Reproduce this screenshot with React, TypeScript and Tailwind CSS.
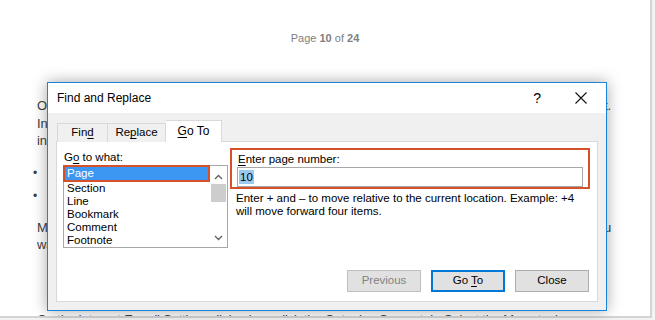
import React from "react";

const ui = { fontFamily: '"Liberation Sans", Arial, sans-serif' };
const doc = { fontFamily: '"Liberation Sans", Arial, sans-serif' };

function U({ children }: { children: React.ReactNode }) {
  return <span className="underline underline-offset-2">{children}</span>;
}

function Chevron({ up }: { up?: boolean }) {
  return (
    <svg width="9" height="6" viewBox="0 0 9 6" className="block">
      <path
        d={up ? "M1 5 L4.5 1.5 L8 5" : "M1 1 L4.5 4.5 L8 1"}
        fill="none"
        stroke="#606060"
        strokeWidth="1.3"
      />
    </svg>
  );
}

export default function App() {
  const items = ["Section", "Line", "Bookmark", "Comment", "Footnote"];
  return (
    <div className="relative w-[655px] h-[320px] overflow-hidden bg-[#f3f3f3]">
      <div className="w-[652px] h-[318px] bg-white border-r-2 border-b-2 border-[#d4d4d4] overflow-hidden">
        <div className="pt-[31px] text-center text-[11px] leading-[14px] text-[#808080]" style={doc}>
          Page <b>10</b> of <b>24</b>
        </div>
        <div className="ml-[37px] pt-[52px] w-[574px] text-[13px] tracking-[-0.2px] text-[#404040]" style={doc}>
          <div className="h-[18px] leading-[18px] text-justify [text-align-last:justify] overflow-hidden">
            On the File tab, click Account Settings, and then click Account Settings again to open it.
          </div>
          <div className="h-[17px] leading-[17px] whitespace-nowrap overflow-hidden">
            In the E-mail tab, select the account you want to change and click Change.
          </div>
          <div className="h-[17px] leading-[17px] whitespace-nowrap overflow-hidden">
            in the Change Account dialog box, click More Settings to continue.
          </div>
          <div className="mt-[15px] flex flex-col gap-[5px]">
            <div className="h-[18px] leading-[18px] flex items-center gap-[20px] -ml-[4px]">
              <span className="text-[12px]">•</span>
              <span>Server settings</span>
            </div>
            <div className="h-[18px] leading-[18px] flex items-center gap-[20px] -ml-[4px]">
              <span className="text-[12px]">•</span>
              <span>Account settings</span>
            </div>
          </div>
          <div className="mt-[14px] h-[17px] leading-[17px] text-justify [text-align-last:justify] overflow-hidden">
            More settings are available from this dialog box, depending on the type of the account that you
          </div>
          <div className="h-[17px] leading-[17px] whitespace-nowrap overflow-hidden">
            want to configure for this mailbox.
          </div>
          <div className="mt-[58px] h-[17px] leading-[17px] whitespace-nowrap">
            On the Internet E-mail Settings dialog box, click the Outgoing Server tab. Select the My outgoing
          </div>
        </div>
      </div>

      {/* Dialog window */}
      <div
        className="absolute left-[47px] top-[82px] w-[560px] h-[229px] border border-[#1a84d8] bg-[#f0f0f0] shadow-[0_0_14px_rgba(0,0,0,0.35)] flex flex-col text-[11.5px] text-black"
        style={ui}
      >
        <div className="h-[30px] bg-white flex items-center pl-[9px] pr-[19px] shrink-0">
          <span className="text-[12px]">Find and Replace</span>
          <span className="ml-auto mr-[34px] text-[14px]">?</span>
          <svg width="12" height="12" viewBox="0 0 12 12">
            <path d="M0.5 0.5 L11.5 11.5 M11.5 0.5 L0.5 11.5" stroke="#111" strokeWidth="1.1" />
          </svg>
        </div>

        <div className="flex-1 flex flex-col px-[8px] pt-[7px] pb-[8px]">
          {/* tabs */}
          <div className="flex items-end h-[22px] -mb-[1px] relative z-10 pl-[1px]">
            <div className="w-[51px] h-[19px] border border-b-0 border-[#d9d9d9] bg-[#f0f0f0] flex items-center justify-center">
              <span>
                Fin<U>d</U>
              </span>
            </div>
            <div className="w-[58px] h-[19px] border border-l-0 border-b-0 border-[#d9d9d9] bg-[#f0f0f0] flex items-center justify-center">
              <span>
                Re<U>p</U>lace
              </span>
            </div>
            <div className="w-[56px] h-[22px] border border-l-0 border-b-0 border-[#d9d9d9] bg-white flex items-center justify-center pb-[2px] text-[12px]">
              <span>
                <U>G</U>o To
              </span>
            </div>
          </div>

          {/* panel */}
          <div className="flex-1 bg-white border border-[#d9d9d9] flex flex-col pl-[6px] pr-[7px] pt-[6px] pb-[9px]">
            <div className="flex gap-[2px]">
              {/* left column */}
              <div className="w-[165px] flex flex-col">
                <div className="h-[17px] leading-[17px] pl-[1px] pt-[1px]">
                  G<U>o</U> to what:
                </div>
                <div className="h-[83px] border border-[#a8a8a8] flex">
                  <div className="flex-1 flex flex-col">
                    <div className="h-[17px] border-2 border-[#d4512a] bg-[#3c97f3] text-white leading-[13px] pl-[2px] -ml-[1px] -mt-[1px]">
                      Page
                    </div>
                    {items.map((it) => (
                      <div key={it} className="h-[13px] leading-[13px] pl-[3px]">
                        {it}
                      </div>
                    ))}
                  </div>
                  <div className="w-[17px] flex flex-col items-center pt-[8px] pb-[6px]">
                    <Chevron up />
                    <div className="mt-[4px] w-[15px] h-[18px] bg-[#cdcdcd]" />
                    <div className="flex-1" />
                    <Chevron />
                  </div>
                </div>
              </div>

              {/* right column */}
              <div className="flex-1 flex flex-col">
                <div className="h-[41px] border-2 border-[#d4512a] px-[5px] pt-[2px]">
                  <div className="h-[15px] leading-[15px] pl-[1px]">
                    <U>E</U>nter page number:
                  </div>
                  <div className="h-[20px] border border-[#a8a8a8] flex items-center pl-[1px]">
                    <span className="bg-[#99c9ef] leading-[14px] px-[1px]">10</span>
                  </div>
                </div>
                <div className="pl-[6px] pt-[3px] leading-[13px]">
                  Enter + and – to move relative to the current location. Example: +4
                  <br />
                  will move forward four items.
                </div>
              </div>
            </div>

            <div className="flex-1" />

            <div className="flex justify-end gap-[10px] pr-[1px]">
              <div className="w-[74px] h-[22px] border border-[#bfbfbf] bg-[#e1e1e1] flex items-center justify-center text-[#838383]">
                <span>Previous</span>
              </div>
              <div className="w-[74px] h-[22px] border-2 border-[#0078d7] bg-[#e1e1e1] flex items-center justify-center">
                <span>
                  Go <U>T</U>o
                </span>
              </div>
              <div className="w-[74px] h-[22px] border border-[#adadad] bg-[#e1e1e1] flex items-center justify-center">
                <span>Close</span>
              </div>
            </div>
          </div>
        </div>
      </div>
    </div>
  );
}
